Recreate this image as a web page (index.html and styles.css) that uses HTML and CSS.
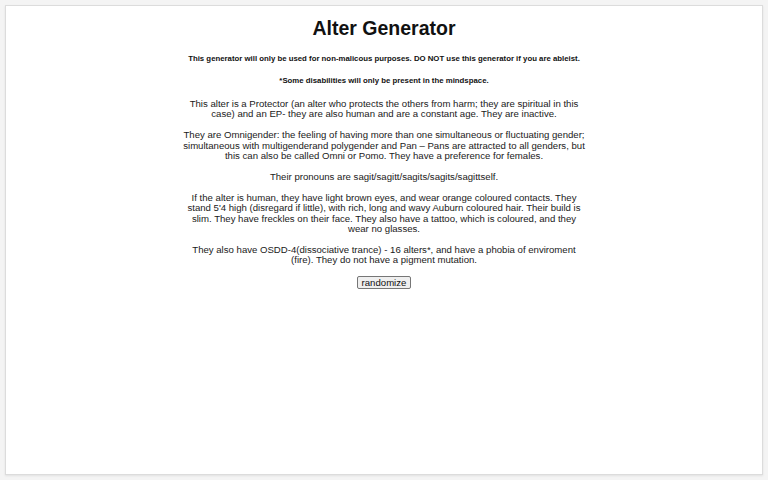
FILE: index.html
```html
<!DOCTYPE html>
<html lang="en">
<head>
  <meta charset="UTF-8">
  <meta name="viewport" content="width=device-width, initial-scale=1.0">
  <title>Alter Generator</title>
  <link rel="stylesheet" href="styles.css">
</head>
<body>
<div class="container">
  <h1>Alter Generator</h1>

  <p class="notice">This generator will only be used for non-malicous purposes. DO NOT use this generator if you are ableist.</p>
  <p class="notice">*Some disabilities will only be present in the mindspace.</p>

  <div class="result">
    <p>This alter is a Protector (an alter who protects the others from harm; they are spiritual in this case) and an EP- they are also human and are a constant age. They are inactive.</p>
    <p>They are Omnigender: the feeling of having more than one simultaneous or fluctuating gender; simultaneous with multigenderand polygender and Pan &ndash; Pans are attracted to all genders, but this can also be called Omni or Pomo. They have a preference for females.</p>
    <p>Their pronouns are sagit/sagitt/sagits/sagits/sagittself.</p>
    <p>If the alter is human, they have light brown eyes, and wear orange coloured contacts. They stand 5'4 high (disregard if little), with rich, long and wavy Auburn coloured hair. Their build is slim. They have freckles on their face. They also have a tattoo, which is coloured, and they wear no glasses.</p>
    <p>They also have OSDD-4(dissociative trance) - 16 alters*, and have a phobia of enviroment (fire). They do not have a pigment mutation.</p>
  </div>

  <button class="randomize" id="randomize">randomize</button>
</div>
</body>
</html>
```

FILE: styles.css
```css
* {
  box-sizing: border-box;
}

body {
  margin: 0;
  padding: 5px;
  background: #f4f4f4;
  font-family: 'Liberation Sans', Arial, sans-serif;
  color: #111;
}

.container {
  min-height: calc(100vh - 10px);
  background: #fff;
  border: 1px solid #dcdcdc;
  box-shadow: 0 1px 2px rgba(0, 0, 0, 0.08);
  text-align: center;
  padding: 11px 20px;
}

h1 {
  font-size: 19.5px;
  margin: 0 0 14px;
}

.notice {
  font-size: 7.8px;
  font-weight: bold;
  margin: 0 0 13px;
}

.notice + .notice {
  margin-bottom: 14px;
}

.result {
  max-width: 402px;
  margin: 0 auto;
  font-size: 9.6px;
  line-height: 10.4px;
  color: #1a1a1a;
}

.result p {
  margin: 10.5px 0;
}

.randomize {
  display: block;
  margin: 10px auto 0;
  font-family: 'Liberation Sans', Arial, sans-serif;
  font-size: 9.6px;
  padding: 0 4px;
  height: 13px;
  line-height: 11px;
  background: #efefef;
  border: 1px solid #767676;
  border-radius: 2px;
  color: #111;
}
```
